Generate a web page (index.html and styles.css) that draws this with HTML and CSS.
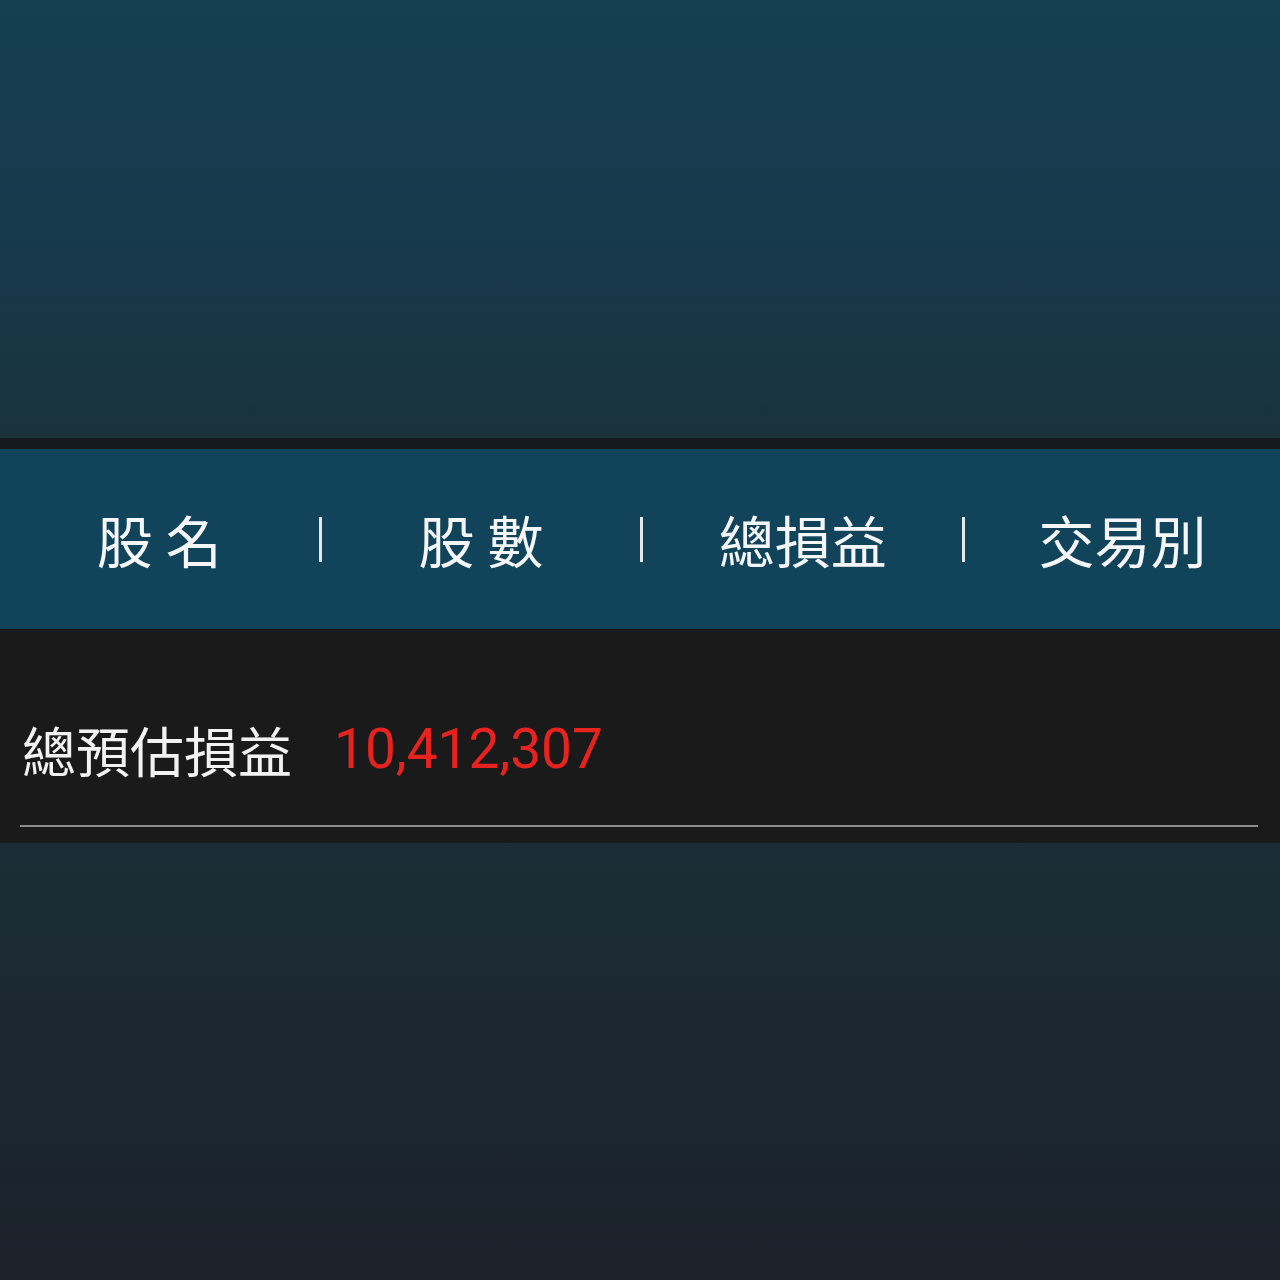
FILE: index.html
```html
<!DOCTYPE html>
<html lang="zh-Hant">
<head>
  <meta charset="utf-8">
  <title>總預估損益</title>
  <link rel="stylesheet" href="styles.css">
</head>
<body>

  <div id="screen">
    <div class="top"></div>
    <div class="band"></div>

    <div class="head">
      <div class="cell spaced">股名</div>
      <span class="divider"></span>
      <div class="cell spaced">股數</div>
      <span class="divider"></span>
      <div class="cell">總損益</div>
      <span class="divider"></span>
      <div class="cell last">交易別</div>
    </div>

    <div class="summary">
      <div class="row">
        <span class="label">總預估損益</span>
        <span class="value">10,412,307</span>
      </div>
      <div class="rule"></div>
    </div>

    <div class="bottom"></div>
  </div>

</body>
</html>
```

FILE: styles.css
```css
* {
  box-sizing: border-box;
}
html, body {
  margin: 0;
  height: 100%;
}
body {
  background-color: #1c222a;
  font-family: "Noto Sans CJK TC", "Noto Sans", sans-serif;
  color: #fff;
}
#screen {
  display: flex;
  flex-direction: column;
  height: 1280px;
}
.top {
  height: 438px;
  background: linear-gradient(#163f52, #17394b 60%, #1a323c);
}
.band {
  height: 11px;
  background-color: #141a1d;
}
.head {
  height: 180px;
  display: flex;
  align-items: center;
  background-color: #11445a;
}
.cell {
  flex: 1;
  text-align: center;
  font-size: 56px;
  line-height: 64px;
  color: #f4f6f7;
}
.cell.last {
  flex: 0 0 315px;
}
.spaced {
  letter-spacing: 13px;
  text-indent: 13px;
}
.divider {
  width: 3px;
  height: 45px;
  background-color: #e6e9ea;
}
.summary {
  height: 214px;
  background-color: #1a1a1a;
  padding: 88px 22px 0 20px;
}
.row {
  display: flex;
  align-items: center;
  gap: 42px;
  height: 64px;
  padding-left: 2px;
}
.label {
  font-size: 54px;
  color: #f2f2f2;
}
.value {
  font-family: Roboto, "Liberation Sans", sans-serif;
  font-size: 55px;
  color: #e8221f;
}
.rule {
  margin-top: 44px;
  height: 2px;
  background-color: #8c8c8c;
}
.bottom {
  flex: 1;
  background: linear-gradient(#1b2d36, #1b2730 50%, #1c222a);
}
```
